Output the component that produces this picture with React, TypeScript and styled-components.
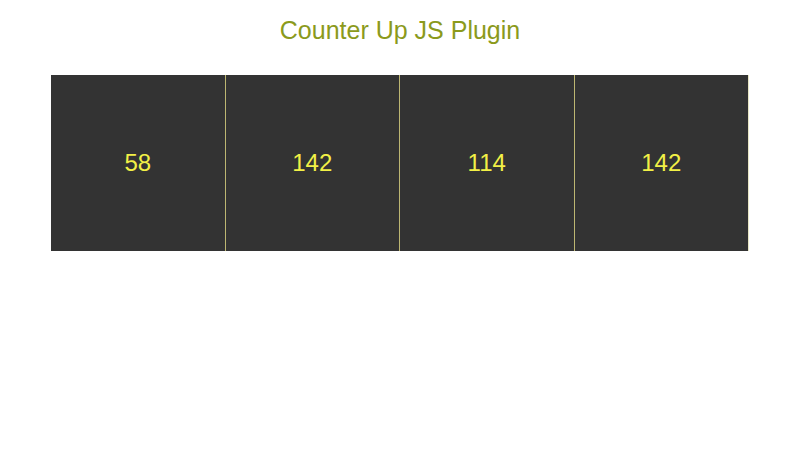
import React from "react";
import styled, { createGlobalStyle } from "styled-components";

const GlobalStyle = createGlobalStyle`
  html, body {
    margin: 0;
    padding: 0;
    background: #ffffff;
    font-family: "Liberation Sans", Arial, sans-serif;
  }
`;

const Page = styled.main`
  display: flex;
  flex-direction: column;
  align-items: center;
`;

const Title = styled.h1`
  margin: 16px 0 0;
  font-size: 25px;
  font-weight: 400;
  line-height: 29px;
  color: #8b9a1c;
  text-align: center;
`;

const Counters = styled.section`
  margin-top: 30px;
  width: 698px;
  display: grid;
  grid-template-columns: repeat(4, 1fr);
  background: #333333;
`;

const Counter = styled.div<{ $last?: boolean }>`
  height: 176px;
  display: flex;
  align-items: center;
  justify-content: center;
  border-right: 1px solid ${(p) => (p.$last ? "#e8e6c4" : "#bdb672")};
  font-size: 24px;
  color: #f2f046;
`;

const values = [58, 142, 114, 142];

export default function App() {
  return (
    <>
      <GlobalStyle />
      <Page>
        <Title>Counter Up JS Plugin</Title>
        <Counters>
          {values.map((v, i) => (
            <Counter key={i} $last={i === values.length - 1}>
              {v}
            </Counter>
          ))}
        </Counters>
      </Page>
    </>
  );
}
